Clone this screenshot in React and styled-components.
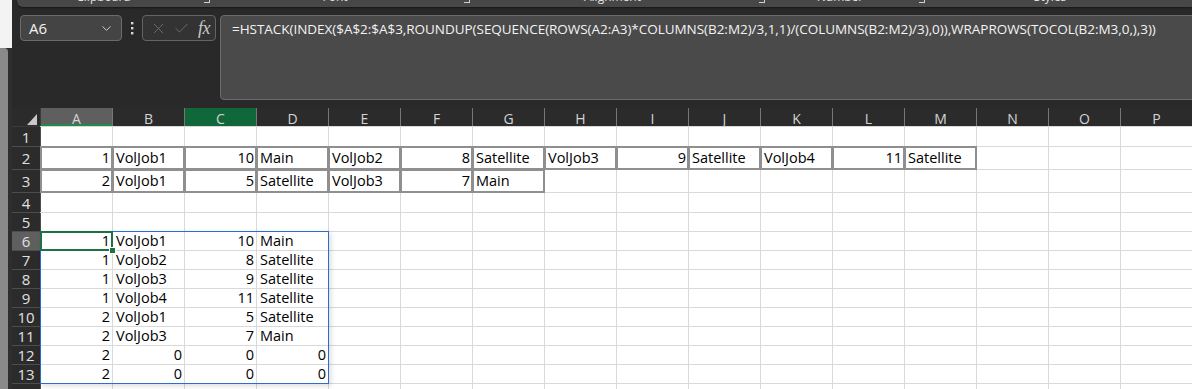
import styled, { createGlobalStyle } from "styled-components";
import { ChevronDown, X, Check } from "lucide-react";

const GlobalStyle = createGlobalStyle`
  html, body {
    margin: 0;
    background: #292929;
    overflow: hidden;
  }
  * {
    box-sizing: border-box;
  }
`;

const FONT = `"Open Sans", "Noto Sans", sans-serif`;
const LETTERS = "ABCDEFGHIJKLMNOP".split("");
const FORMULA =
  "=HSTACK(INDEX($A$2:$A$3,ROUNDUP(SEQUENCE(ROWS(A2:A3)*COLUMNS(B2:M2)/3,1,1)/(COLUMNS(B2:M2)/3),0)),WRAPROWS(TOCOL(B2:M3,0,),3))";

// rows of the sheet, with their height and what is in them
const ROWS = [
  { n: 1, h: 19 },
  {
    n: 2,
    h: 22,
    valign: "center",
    boxed: 13,
    cells: [1, "VolJob1", 10, "Main", "VolJob2", 8, "Satellite", "VolJob3", 9, "Satellite", "VolJob4", 11, "Satellite"],
  },
  {
    n: 3,
    h: 22,
    valign: "center",
    boxed: 7,
    cells: [2, "VolJob1", 5, "Satellite", "VolJob3", 7, "Main"],
  },
  { n: 4, h: 19 },
  { n: 5, h: 18 },
  { n: 6, h: 18, cells: [1, "VolJob1", 10, "Main"] },
  { n: 7, h: 18, cells: [1, "VolJob2", 8, "Satellite"] },
  { n: 8, h: 18, cells: [1, "VolJob3", 9, "Satellite"] },
  { n: 9, h: 18, cells: [1, "VolJob4", 11, "Satellite"] },
  { n: 10, h: 18, cells: [2, "VolJob1", 5, "Satellite"] },
  { n: 11, h: 18, cells: [2, "VolJob3", 7, "Main"] },
  { n: 12, h: 18, cells: [2, 0, 0, 0] },
  { n: 13, h: 18, cells: [2, 0, 0, 0] },
  { n: 14, h: 18 },
];

const RIBBON_GROUPS = [
  { label: "Clipboard", w: 203 },
  { label: "Font", w: 260 },
  { label: "Alignment", w: 295 },
  { label: "Number", w: 160 },
  { label: "Styles", w: 260 },
];

const Window = styled.div`
  display: flex;
  width: 1192px;
  height: 389px;
  overflow: hidden;
  background: #292929;
`;

const LeftEdge = styled.div`
  display: flex;
  flex-direction: column;
  width: 12px;
  flex-shrink: 0;
  background: #2e2e2e;
`;

const EdgeTop = styled.div`
  height: 48px;
  background: #f3f3f3;
`;

const EdgeBar = styled.div`
  flex: 1;
  width: 8px;
  background: #8a8a8a;
  border-top-right-radius: 4px;
`;

const Main = styled.div`
  flex: 1;
  min-width: 0;
  display: flex;
  flex-direction: column;
  overflow: hidden;
`;

const Ribbon = styled.div`
  display: flex;
  height: 7px;
  margin-left: 5px;
  background: #474747;
  border-bottom-left-radius: 6px;
  box-shadow: 0 1px 2px rgba(0, 0, 0, 0.45);
  overflow: hidden;
  flex-shrink: 0;
`;

const RibbonGroup = styled.div`
  display: flex;
  justify-content: center;
  align-items: flex-start;
  width: ${(p) => p.$w}px;
  flex-shrink: 0;
  padding-right: 30px;
  position: relative;
`;

const RibbonLabel = styled.span`
  margin-top: -10px;
  font: 12px/14px ${FONT};
  color: #e2e2e2;
`;

const Launcher = styled.span`
  position: absolute;
  right: 10px;
  top: -3px;
  width: 6px;
  height: 6px;
  border-right: 1px solid #cfcfcf;
  border-bottom: 1px solid #cfcfcf;
`;

const FormulaRow = styled.div`
  display: flex;
  align-items: flex-start;
  height: 93px;
  padding: 8px 0 0 8px;
  flex-shrink: 0;
`;

const NameBox = styled.div`
  display: flex;
  align-items: center;
  justify-content: space-between;
  width: 102px;
  height: 26px;
  padding: 0 7px 0 8px;
  border: 1px solid #6b6b6b;
  border-radius: 4px;
  background: #444444;
  color: #f2f2f2;
  font: 15px ${FONT};
`;

const Dots = styled.div`
  display: flex;
  align-items: center;
  justify-content: center;
  width: 20px;
  height: 26px;
`;

const EditButtons = styled.div`
  display: flex;
  align-items: center;
  gap: 6px;
  width: 74px;
  height: 26px;
  padding: 0 5px 0 7px;
  border: 1px solid #646464;
  border-radius: 4px;
  background: #333333;
`;

const Fx = styled.span`
  margin-left: auto;
  font: italic 18px "Liberation Serif", serif;
  color: #c8c8c8;
  letter-spacing: -0.5px;
`;

const FormulaBox = styled.div`
  flex: 1;
  height: 85px;
  margin-left: 4px;
  margin-right: -8px;
  padding: 4px 11px;
  border: 1px solid #6b6b6b;
  border-radius: 4px;
  background: #4a4a4a;
  color: #f3f3f3;
  font: 13.5px/18px ${FONT};
  letter-spacing: -0.04px;
  white-space: nowrap;
  overflow: hidden;
`;

const Sheet = styled.div`
  display: grid;
  grid-template-columns: 28px repeat(16, 71px);
  grid-template-rows: 18px ${ROWS.map((r) => r.h + "px").join(" ")};
  gap: 1px;
  margin-top: 8px;
  background: #d9d9d9;
`;

const Corner = styled.div`
  grid-row: 1;
  grid-column: 1;
  display: flex;
  align-items: flex-end;
  justify-content: flex-end;
  padding: 0 3px 1px 0;
  background: #2b2b2b;
  box-shadow: 1px 0 0 #3a3a3a, 0 1px 0 #3a3a3a;
`;

const CornerTriangle = styled.span`
  width: 0;
  height: 0;
  border-style: solid;
  border-width: 0 0 11px 10px;
  border-color: transparent transparent #c9c9c9 transparent;
`;

const HEADER_BG = {
  selected: "#5f5f5f",
  hover: "#10673a",
};

const ColHeader = styled.div`
  grid-row: 1;
  grid-column: ${(p) => p.$col};
  display: flex;
  justify-content: center;
  align-items: center;
  padding-top: 2px;
  background: ${(p) => HEADER_BG[p.$state] || "#2b2b2b"};
  color: #d4d4d4;
  font: 14px ${FONT};
  box-shadow: 1px 0 0 #767676
    ${(p) => (p.$state === "selected" ? ", inset 0 -2px 0 #1f8a4c" : "")};
`;

const RowHeader = styled.div`
  grid-row: ${(p) => p.$row};
  grid-column: 1;
  display: flex;
  justify-content: center;
  align-items: center;
  background: ${(p) => (p.$selected ? "#5f5f5f" : "#2b2b2b")};
  color: #e0e0e0;
  font: 15px ${FONT};
  box-shadow: 0 1px 0 #4d4d4d, 1px 0 0 #4d4d4d;
`;

const Cell = styled.div`
  grid-row: ${(p) => p.$row};
  grid-column: ${(p) => p.$col};
  display: flex;
  align-items: ${(p) => (p.$valign === "center" ? "center" : "flex-end")};
  justify-content: ${(p) => (p.$num ? "flex-end" : "flex-start")};
  padding: 0 2px 0 3px;
  background: #ffffff;
  color: #000000;
  font: 14.5px/18px ${FONT};
  white-space: nowrap;
  ${(p) => p.$boxed && "outline: 2px solid #8f8f8f; outline-offset: -1px;"}
`;

const Selection = styled.div`
  grid-row: 7 / 15;
  grid-column: 2 / 6;
  margin: -1px;
  border: 1px solid #2d6bd4;
  box-shadow: 2px 2px 5px rgba(0, 0, 0, 0.14);
  pointer-events: none;
  position: relative;
  z-index: 1;
`;

const ActiveCell = styled.div`
  grid-row: 7;
  grid-column: 2;
  margin: -1px;
  border: 2px solid #1e7145;
  pointer-events: none;
  position: relative;
  z-index: 2;
`;

const FillHandle = styled.span`
  position: absolute;
  right: -5px;
  bottom: -5px;
  width: 7px;
  height: 7px;
  background: #1e7145;
  border: 1px solid #ffffff;
`;

function DotsIcon() {
  return (
    <svg width="3" height="14" viewBox="0 0 3 14">
      <rect x="0" y="1" width="2.4" height="2.4" fill="#d8d8d8" />
      <rect x="0" y="6" width="2.4" height="2.4" fill="#d8d8d8" />
      <rect x="0" y="11" width="2.4" height="2.4" fill="#d8d8d8" />
    </svg>
  );
}

function SheetRow({ row, index }) {
  const gridRow = index + 2;
  return (
    <>
      <RowHeader $row={gridRow} $selected={row.n === 6}>
        {row.n}
      </RowHeader>
      {LETTERS.map((letter, c) => {
        const value = row.cells ? row.cells[c] : undefined;
        return (
          <Cell
            key={letter}
            $row={gridRow}
            $col={c + 2}
            $num={typeof value === "number"}
            $valign={row.valign}
            $boxed={row.boxed && c < row.boxed}
          >
            {value}
          </Cell>
        );
      })}
    </>
  );
}

export default function App() {
  return (
    <>
      <GlobalStyle />
      <Window>
        <LeftEdge>
          <EdgeTop />
          <EdgeBar />
        </LeftEdge>
        <Main>
          <Ribbon>
            {RIBBON_GROUPS.map((g) => (
              <RibbonGroup key={g.label} $w={g.w}>
                <RibbonLabel>{g.label}</RibbonLabel>
                {g.label !== "Styles" && <Launcher />}
              </RibbonGroup>
            ))}
          </Ribbon>

          <FormulaRow>
            <NameBox>
              <span>A6</span>
              <ChevronDown size={15} color="#d4d4d4" strokeWidth={1.5} />
            </NameBox>
            <Dots>
              <DotsIcon />
            </Dots>
            <EditButtons>
              <X size={17} color="#6f6f6f" strokeWidth={1.3} />
              <Check size={17} color="#6f6f6f" strokeWidth={1.3} />
              <Fx>fx</Fx>
            </EditButtons>
            <FormulaBox>{FORMULA}</FormulaBox>
          </FormulaRow>

          <Sheet>
            <Corner>
              <CornerTriangle />
            </Corner>
            {LETTERS.map((letter, c) => (
              <ColHeader
                key={letter}
                $col={c + 2}
                $state={letter === "A" ? "selected" : letter === "C" ? "hover" : ""}
              >
                {letter}
              </ColHeader>
            ))}
            {ROWS.map((row, i) => (
              <SheetRow key={row.n} row={row} index={i} />
            ))}
            <Selection />
            <ActiveCell>
              <FillHandle />
            </ActiveCell>
          </Sheet>
        </Main>
      </Window>
    </>
  );
}
